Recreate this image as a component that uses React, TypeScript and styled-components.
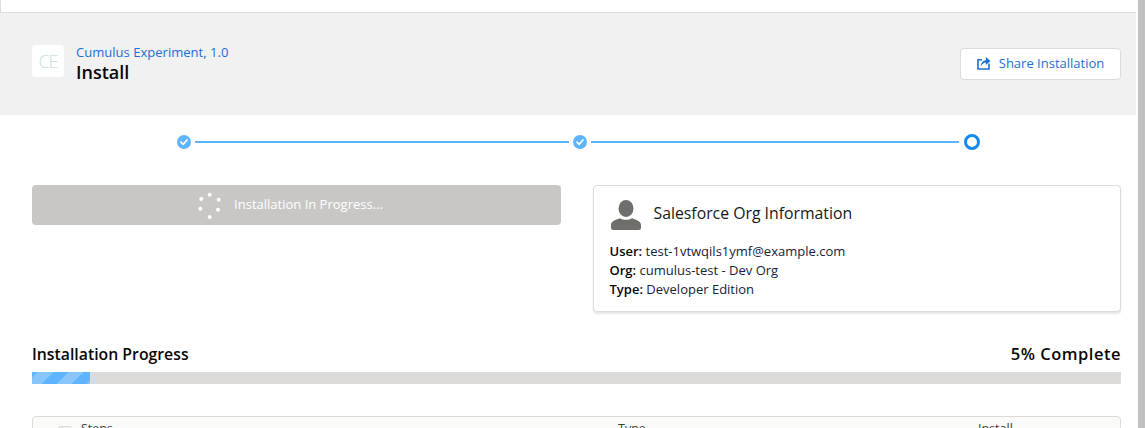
import React from "react";
import styled, { createGlobalStyle } from "styled-components";

const Global = createGlobalStyle`
  html, body { margin: 0; padding: 0; height: 428px; overflow: hidden; background: #fff; }
  body { font-family: "Open Sans", "Noto Sans", "Liberation Sans", sans-serif; color: #080707; }
`;

const Frame = styled.div`
  display: flex;
  height: 428px;
  overflow: hidden;
`;
const Page = styled.main`
  width: 1136px;
  flex: none;
`;
const Gutter = styled.div`
  flex: 1;
  display: flex;
  justify-content: flex-end;
`;
const ScrollThumb = styled.div`
  width: 7px;
  background: #c1c1c1;
`;
const TopStrip = styled.div`
  height: 12px;
  border-left: 1px solid #dddbda;
  border-bottom: 1px solid #dddbda;
`;
const Header = styled.header`
  height: 102px;
  background: #f1f1f1;
  padding: 32px 15px 0 32px;
  box-sizing: border-box;
  display: flex;
  justify-content: space-between;
  align-items: flex-start;
`;
const HeaderLeft = styled.div`
  display: flex;
  gap: 12px;
`;
const Logo = styled.div`
  width: 32px;
  height: 32px;
  background: #fff;
  border-radius: 3px;
  display: flex;
  align-items: center;
  justify-content: center;
  color: #c4e0e6;
  font-size: 18px;
  font-weight: 300;
  letter-spacing: -1px;
`;
const TitleBlock = styled.div`
  display: flex;
  flex-direction: column;
  margin-top: -1px;
`;
const AppLink = styled.a`
  color: #1b6fd6;
  font-size: 13.05px;
  line-height: 17px;
`;
const PageTitle = styled.h1`
  margin: 0;
  font-size: 18px;
  line-height: 22px;
  font-weight: 600;
  color: #080707;
`;
const ShareButton = styled.button`
  width: 161px;
  height: 32px;
  margin-top: 3px;
  background: #fff;
  border: 1px solid #dddbda;
  border-radius: 4px;
  color: #1b6fd6;
  font: inherit;
  font-size: 13px;
  display: flex;
  align-items: center;
  justify-content: center;
  gap: 8px;
  padding: 0 0 2px;
`;
const Stepper = styled.div`
  display: flex;
  align-items: center;
  height: 16px;
  margin: 19px 0 0 177px;
`;
const Done = styled.span`
  width: 14px;
  height: 14px;
  flex: none;
  border-radius: 50%;
  background: #5eb4ff;
  display: flex;
  align-items: center;
  justify-content: center;
`;
const Line = styled.span<{ $w: number }>`
  width: ${(p) => p.$w}px;
  height: 2px;
  background: #5eb4ff;
  margin: 0 4px;
  flex: none;
`;
const Ring = styled.span`
  width: 16px;
  height: 16px;
  flex: none;
  margin-left: 1px;
  box-sizing: border-box;
  border: 3.5px solid #1589ee;
  border-radius: 50%;
`;
const Columns = styled.section`
  display: grid;
  grid-template-columns: 529px 528px;
  gap: 32px;
  margin: 35px 0 0 32px;
  align-items: start;
`;
const Banner = styled.div`
  height: 40px;
  border-radius: 4px;
  background: #c9c7c5;
  color: #fff;
  font-size: 13px;
  display: flex;
  align-items: center;
  justify-content: center;
  gap: 12px;
  padding-right: 12px;
  box-sizing: border-box;
`;
const BannerText = styled.span`
  padding-bottom: 2px;
`;
const Card = styled.div`
  height: 127px;
  box-sizing: border-box;
  background: #fff;
  border: 1px solid #dddbda;
  border-radius: 4px;
  box-shadow: 0 2px 2px rgba(0, 0, 0, 0.1);
  padding: 12px 16px 12px 15.500px;
`;
const CardHead = styled.div`
  display: flex;
  align-items: center;
  gap: 12px;
  height: 33px;
  margin-bottom: 11px;
`;
const CardTitle = styled.h2`
  margin: 0 0 3px;
  font-size: 15.8px;
  font-weight: 400;
  color: #181818;
`;
const Fact = styled.div`
  font-size: 13px;
  line-height: 19px;
  color: #16223a;
  b { font-weight: 600; color: #080707; }
`;
const ProgressHead = styled.div`
  display: flex;
  justify-content: space-between;
  margin: 32px 15px 0 32px;
  font-size: 15.8px;
  line-height: 20px;
  font-weight: 600;
  color: #080707;
`;
const Percent = styled.span`
  font-size: 16.5px;
  letter-spacing: 0.5px;
`;
const Track = styled.div`
  height: 12px;
  margin: 8px 15px 0 32px;
  background: #dddbda;
`;
const Fill = styled.div`
  height: 100%;
  background: repeating-linear-gradient(
    135deg,
    #5eb4ff 0 4px,
    #87c5fb 4px 15px,
    #5eb4ff 15px 21.500px
  );
`;
const Table = styled.div`
  height: 60px;
  margin: 32px 15px 0 32px;
  background: #fafaf9;
  border: 1px solid #dddbda;
  border-radius: 4px;
  box-sizing: border-box;
  display: grid;
  grid-template-columns: 585px 360px 1fr;
  font-size: 12.5px;
  line-height: 17px;
  color: #3e3e3c;
  padding-top: 3px;
`;
const StepsCell = styled.div`
  display: flex;
  gap: 9px;
  padding-left: 25px;
`;
const Check = styled.span`
  width: 14px;
  height: 14px;
  margin-top: 6px;
  background: #f0efed;
  border: 1px solid #dddbda;
  border-radius: 2px;
  box-sizing: border-box;
`;

const Tick = () => (
  <svg width="10" height="10" viewBox="0 0 10 10" fill="none">
    <path d="M2 5.2 4.2 7.3 8 3" stroke="#fff" strokeWidth="1.7" strokeLinecap="round" strokeLinejoin="round" />
  </svg>
);

const ShareIcon = () => (
  <svg width="14" height="14" viewBox="0 0 14 14" fill="none">
    <path d="M5 3.800H1v9.200h11V7.500" stroke="#1b6fd6" strokeWidth="1.6" />
    <path d="M3.600 10.500C3.800 7.200 5.800 4.700 8.800 4.300V1l4.700 4-4.700 4V6.500C6.700 6.700 5 8 3.600 10.500Z" fill="#1b6fd6" />
  </svg>
);

const Spinner = () => {
  const dots = [[11.7, 3.7], [20.7, 8.7], [20, 18.7], [11.7, 26], [2.3, 17.7], [3.3, 8]];
  return (
    <svg width="24" height="28" viewBox="0 0 24 28">
      {dots.map(([x, y]) => (
        <circle key={`${x}-${y}`} cx={x} cy={y} r={2} fill="#fff" />
      ))}
    </svg>
  );
};

const Person = () => (
  <svg width="32" height="30" viewBox="0 0 32 30" fill="#706e6b">
    <ellipse cx="16" cy="8.500" rx="7.500" ry="8.500" />
    <path d="M1 25c0-3.500 4-5 9-6.800 3.600 2 8.400 2 12 0 5 1.800 9 3.300 9 6.800v2.500a2.500 2.500 0 0 1-2.500 2.500h-25A2.500 2.500 0 0 1 1 27.500Z" />
  </svg>
);

export default function App() {
  return (
    <Frame>
      <Global />
      <Page>
        <TopStrip />
        <Header>
          <HeaderLeft>
            <Logo>CE</Logo>
            <TitleBlock>
              <AppLink>Cumulus Experiment, 1.0</AppLink>
              <PageTitle>Install</PageTitle>
            </TitleBlock>
          </HeaderLeft>
          <ShareButton>
            <ShareIcon />
            Share Installation
          </ShareButton>
        </Header>
        <Stepper>
          <Done><Tick /></Done>
          <Line $w={374} />
          <Done><Tick /></Done>
          <Line $w={368} />
          <Ring />
        </Stepper>
        <Columns>
          <Banner>
            <Spinner />
            <BannerText>Installation In Progress...</BannerText>
          </Banner>
          <Card>
            <CardHead>
              <Person />
              <CardTitle>Salesforce Org Information</CardTitle>
            </CardHead>
            <Fact><b>User:</b> test-1vtwqils1ymf@example.com</Fact>
            <Fact><b>Org:</b> cumulus-test - Dev Org</Fact>
            <Fact><b>Type:</b> Developer Edition</Fact>
          </Card>
        </Columns>
        <ProgressHead>
          <span>Installation Progress</span>
          <Percent>5% Complete</Percent>
        </ProgressHead>
        <Track>
          <Fill style={{ width: `${(58 / 1089) * 100}%` }} />
        </Track>
        <Table>
          <StepsCell><Check />Steps</StepsCell>
          <div>Type</div>
          <div>Install</div>
        </Table>
      </Page>
      <Gutter><ScrollThumb /></Gutter>
    </Frame>
  );
}
